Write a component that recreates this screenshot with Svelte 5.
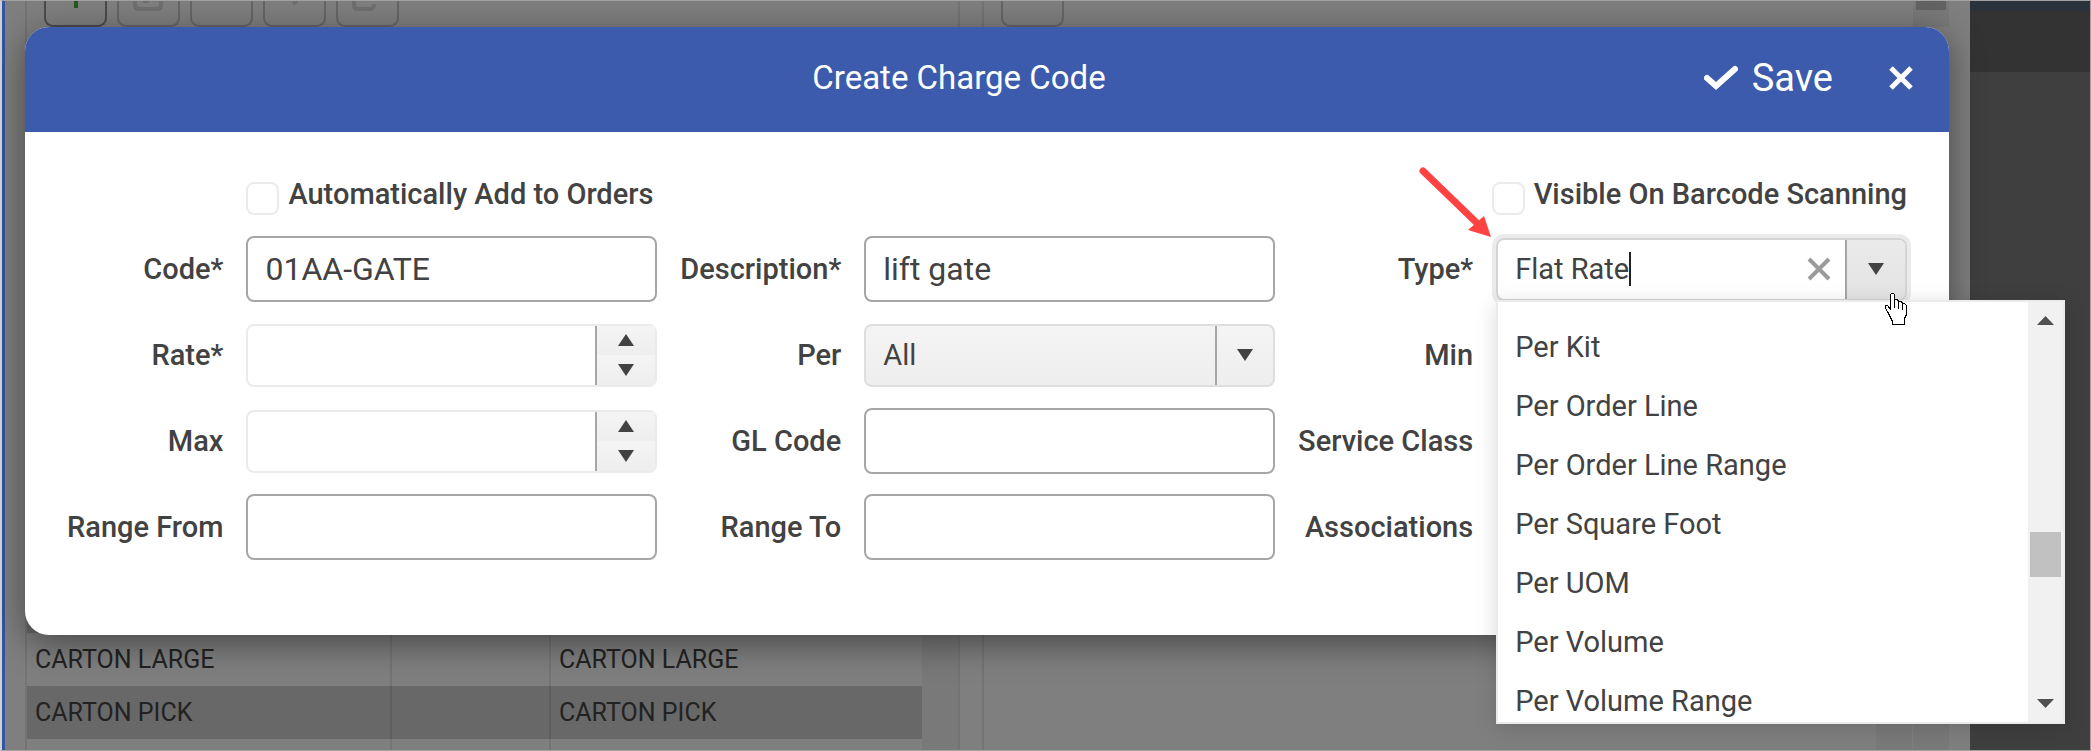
<script>
    let code = "01AA-GATE";
    let description = "lift gate";
    let type = "Flat Rate";
    let rate = "";
    let min = "";
    let max = "";
    let glCode = "";
    let rangeFrom = "";
    let rangeTo = "";
    let associations = "";
    let autoAdd = false;
    let visibleOnScan = false;

    let tools = ["add", "save", "blank", "filter", "copy"];

    let rows = ["CARTON LARGE", "CARTON PICK"];

    let types = [
        "Per Kit",
        "Per Order Line",
        "Per Order Line Range",
        "Per Square Foot",
        "Per UOM",
        "Per Volume",
        "Per Volume Range",
    ];
</script>

<div class="page">
    <main class="workspace">
        <section class="panel left">
            <div class="toolbar">
                {#each tools as tool}
                <button class="tool {tool}" aria-label={tool}>
                    <svg width="36" height="26" viewBox="0 0 36 26" fill="none" stroke-width="4">
                        {#if tool === "add"}
                        <path d="M18 0V7" stroke="#1d5a20" />
                        {:else if tool === "save"}
                        <path d="M4 0V4Q4 8 8 8H26Q30 8 30 4V0M12 0L18 0" />
                        {:else if tool === "filter"}
                        <path d="M16 3L20 0" />
                        {:else if tool === "copy"}
                        <path d="M4 0V4Q4 8 8 8H20Q24 8 24 3" />
                        {/if}
                    </svg>
                </button>
                {/each}
            </div>
            <div class="grid-wrap">
                <table>
                    <tbody>
                        <tr class="dark"><td></td><td></td><td></td></tr>
                        {#each rows as row, i}
                        <tr class:dark={i % 2 === 1}>
                            <td>{row}</td>
                            <td></td>
                            <td>{row}</td>
                        </tr>
                        {/each}
                        <tr class="cut"><td></td><td></td><td></td></tr>
                    </tbody>
                </table>
                <div class="track"></div>
            </div>
        </section>
        <section class="panel right">
            <div class="toolbar">
                <button class="tool" aria-label="more"></button>
                <div class="track top"><div class="thumb"></div></div>
            </div>
            <div class="tracks">
                <div class="track"></div>
                <div class="track"></div>
            </div>
        </section>
    </main>
    <aside class="outside"></aside>

    <div class="overlay">
        <div class="modal" role="dialog" aria-labelledby="title">
            <header>
                <h1 id="title">Create Charge Code</h1>
                <div class="actions">
                    <button class="save-button">
                        <svg width="34" height="26" viewBox="0 0 34 26" fill="none" stroke="#fff" stroke-width="6" stroke-linecap="round">
                            <path d="M3 13L12 21L31 4" />
                        </svg>
                        Save
                    </button>
                    <button class="close" aria-label="Close">
                        <svg width="24" height="24" viewBox="0 0 24 24" stroke="#fff" stroke-width="5">
                            <path d="M2 2L22 22M22 2L2 22" />
                        </svg>
                    </button>
                </div>
            </header>

            <form>
                <label class="check first">
                    <input type="checkbox" bind:checked={autoAdd} />
                    Automatically Add to Orders
                </label>
                <label class="check last">
                    <input type="checkbox" bind:checked={visibleOnScan} />
                    Visible On Barcode Scanning
                </label>

                <label for="code">Code*</label>
                <input class="text" id="code" bind:value={code} />
                <label for="description">Description*</label>
                <input class="text" id="description" bind:value={description} />
                <label for="type">Type*</label>
                <div class="combo">
                    <div class="entry">
                        <input id="type" bind:value={type} />
                        <span class="caret"></span>
                    </div>
                    <button type="button" class="clear" aria-label="Clear">
                        <svg width="24" height="24" viewBox="0 0 24 24" stroke="#9b9b9b" stroke-width="4">
                            <path d="M2 2L22 22M22 2L2 22" />
                        </svg>
                    </button>
                    <button type="button" class="drop" aria-label="Open list">
                        <svg width="16" height="12" viewBox="0 0 16 12"><path d="M0 0H16L8 12Z" fill="#424242" /></svg>
                    </button>

                    <div class="menu">
                        <ul role="listbox" aria-label="Type">
                            {#each types as item}
                            <li role="option" aria-selected="false">{item}</li>
                            {/each}
                        </ul>
                        <div class="scroll">
                            <svg width="17" height="9" viewBox="0 0 17 9"><path d="M0 9L8.5 0L17 9Z" fill="#505050" /></svg>
                            <div class="bar"></div>
                            <svg width="17" height="9" viewBox="0 0 17 9"><path d="M0 0H17L8.5 9Z" fill="#505050" /></svg>
                        </div>
                    </div>

                    <svg class="pointer" width="84" height="80" viewBox="0 0 84 80">
                        <path d="M9 11L66 66" stroke="#ff4343" stroke-width="7" stroke-linecap="round" />
                        <path d="M77 77L70 56L54 70Z" fill="#ff4343" />
                    </svg>
                    <svg class="hand" width="24" height="33" viewBox="0 0 24 33" shape-rendering="crispEdges">
                        <path d="M5.5 1.5L6.5 .5H8.5L9.5 1.5V6.5H12.5L13.5 8.5H16.5L17.5 10.5H19.5L21.5 12.5V21.5L19.5 25.5V31.5H7.5V28.5L4.5 22.5L2.5 18.5L.5 15.5V12.5H2.5L5.5 16.5Z" fill="#fff" stroke="#000" />
                        <path d="M9.5 6V15M13.5 8V16M17.5 10V17" stroke="#000" />
                    </svg>
                </div>

                <label for="rate">Rate*</label>
                <div class="spin">
                    <input id="rate" bind:value={rate} />
                    <div class="steps">
                        <button type="button" aria-label="Increase rate"><svg width="16" height="12" viewBox="0 0 16 12"><path d="M0 12L8 0L16 12Z" fill="#424242" /></svg></button>
                        <button type="button" aria-label="Decrease rate"><svg width="16" height="12" viewBox="0 0 16 12"><path d="M0 0H16L8 12Z" fill="#424242" /></svg></button>
                    </div>
                </div>
                <label for="per">Per</label>
                <div class="select">
                    <select id="per">
                        <option>All</option>
                    </select>
                    <svg width="16" height="12" viewBox="0 0 16 12"><path d="M0 0H16L8 12Z" fill="#424242" /></svg>
                </div>
                <label for="min">Min</label>
                <div class="spin">
                    <input id="min" bind:value={min} />
                </div>

                <label for="max">Max</label>
                <div class="spin">
                    <input id="max" bind:value={max} />
                    <div class="steps">
                        <button type="button" aria-label="Increase max"><svg width="16" height="12" viewBox="0 0 16 12"><path d="M0 12L8 0L16 12Z" fill="#424242" /></svg></button>
                        <button type="button" aria-label="Decrease max"><svg width="16" height="12" viewBox="0 0 16 12"><path d="M0 0H16L8 12Z" fill="#424242" /></svg></button>
                    </div>
                </div>
                <label for="gl">GL Code</label>
                <input class="text" id="gl" bind:value={glCode} />
                <label for="service">Service Class</label>
                <div class="select">
                    <select id="service"></select>
                </div>

                <label for="from">Range From</label>
                <input class="text" id="from" bind:value={rangeFrom} />
                <label for="to">Range To</label>
                <input class="text" id="to" bind:value={rangeTo} />
                <label for="associations">Associations</label>
                <input class="text" id="associations" bind:value={associations} />
            </form>
        </div>
    </div>
</div>

<style>
    :global(body) {
        margin: 0;
    }

    .page, .page * {
        box-sizing: border-box;
    }

    .page {
        position: relative;
        display: flex;
        height: 100vh;
        overflow: hidden;
        font-family: Roboto, sans-serif;
        font-size: 29px;
        color: #424242;
        border-top: 1px solid #a2a2a2;
        border-bottom: 1px solid #a2a2a2;
        border-left: 2px solid #d0d0d0;
        border-right: 1px solid #a2a2a2;
    }

    button, input, select {
        font: inherit;
        color: inherit;
        margin: 0;
        padding: 0;
        border: 0;
        background: none;
        outline: none;
        min-width: 0;
    }

    .workspace {
        flex: 1;
        display: flex;
        gap: 22px;
        padding: 0 21px 0 20px;
        background: #7f7f7f;
        border-left: 3px solid #3056a4;
    }

    .outside {
        width: 120px;
        background: linear-gradient(#2a323c 10px, #333 10px, #333 71px, #3f3f3f 71px);
    }

    .panel {
        display: flex;
        flex-direction: column;
        justify-content: space-between;
        border-left: 2px solid #747474;
    }

    .left {
        flex: 934;
        border-right: 2px solid #747474;
    }

    .right {
        flex: 968;
    }

    .toolbar {
        display: flex;
        gap: 10px;
        padding-left: 17px;
        height: 26px;
    }

    .tool {
        display: flex;
        justify-content: center;
        width: 63px;
        height: 26px;
        border: 2px solid #666;
        border-top: 0;
        border-radius: 0 0 9px 9px;
        stroke: #6f6f6f;
    }

    .add {
        border-color: #4b4b4b;
    }

    .grid-wrap {
        display: flex;
    }

    .track {
        width: 36px;
        background: #797979;
    }

    .track.top {
        margin-left: auto;
        padding: 0 3px;
    }

    .thumb {
        height: 9px;
        background: #636363;
    }

    .tracks {
        display: flex;
        justify-content: flex-end;
        gap: 1px;
        height: 80px;
    }

    table {
        flex: 1;
        table-layout: fixed;
        border-collapse: collapse;
        font-size: 25px;
        color: #222;
    }

    td {
        height: 53px;
        padding: 0 8px;
        border-right: 2px solid #747474;
    }

    td:nth-child(1) {
        width: 364px;
    }

    td:nth-child(2) {
        width: 159px;
    }

    td:last-child {
        border-right: 0;
    }

    .dark {
        background: #686868;
    }

    .dark td {
        border-color: #5e5e5e;
    }

    .cut td {
        height: 11px;
    }

    .overlay {
        position: absolute;
        inset: 0;
        padding: 26px 141px 0 23px;
    }

    .modal {
        border-radius: 24px;
        background: #fff;
        box-shadow: 0 8px 36px rgba(0, 0, 0, 0.45);
    }

    header {
        display: grid;
        grid-template-columns: 1fr auto 1fr;
        align-items: center;
        height: 105px;
        padding: 0 36px 4px 0;
        color: #fff;
        background: #3c5bac;
        border-radius: 24px 24px 0 0;
    }

    h1 {
        grid-column: 2;
        margin: 0;
        padding-right: 20px;
        font-size: 33px;
        font-weight: 400;
    }

    .actions {
        display: flex;
        justify-content: flex-end;
        align-items: center;
        gap: 56px;
    }

    .save-button {
        display: flex;
        align-items: center;
        gap: 14px;
        font-size: 38px;
    }

    .close {
        display: flex;
    }

    form {
        display: grid;
        grid-template-columns: auto minmax(0, 1fr) auto minmax(0, 1fr) auto minmax(0, 1fr);
        grid-template-rows: 44px repeat(4, 86px);
        column-gap: 23px;
        align-items: center;
        padding: 50px 42px 65px;
    }

    label {
        font-weight: 500;
        text-align: right;
        white-space: nowrap;
    }

    .check {
        display: flex;
        gap: 9px;
        align-self: start;
        line-height: 24px;
    }

    .check input {
        appearance: none;
        flex-shrink: 0;
        width: 33px;
        height: 33px;
        border: 2px solid #ebebeb;
        border-radius: 8px;
    }

    .first {
        grid-column: 2;
    }

    .last {
        grid-column: 6;
        justify-self: end;
    }

    .text {
        width: 100%;
        height: 66px;
        padding: 0 17px;
        border: 2px solid #a6a6a6;
        border-radius: 8px;
        font-size: 32px;
    }

    .spin, .select, .combo {
        display: flex;
        height: 63px;
        border: 2px solid #ebebeb;
        border-radius: 8px;
    }

    .spin input {
        flex: 1;
        padding: 0 18px;
    }

    .steps {
        display: flex;
        flex-direction: column;
        width: 60px;
        border-left: 2px solid #a6a6a6;
    }

    .steps button {
        flex: 1;
        display: flex;
        align-items: center;
        justify-content: center;
        background: linear-gradient(#f4f4f4, #eee);
    }

    .select {
        align-items: center;
        border-color: #dedede;
        background: linear-gradient(#f4f4f4, #eee);
    }

    .select select {
        appearance: none;
        flex: 1;
        height: 59px;
        padding: 0 17px;
        border-right: 2px solid #a6a6a6;
    }

    .select svg {
        margin: 0 20px;
    }

    .combo {
        position: relative;
        z-index: 1;
        border-color: #d4d4d4;
        box-shadow: 0 0 0 4px #ebebeb;
    }

    .entry {
        flex: 1;
        display: flex;
        align-items: center;
        padding-left: 17px;
    }

    .entry input {
        field-sizing: content;
    }

    .caret {
        width: 2px;
        height: 34px;
        background: #222;
    }

    .clear {
        display: flex;
        align-items: center;
        padding: 0 14px;
    }

    .drop {
        display: flex;
        align-items: center;
        justify-content: center;
        width: 60px;
        border-left: 2px solid #a6a6a6;
        border-radius: 0 6px 6px 0;
        background: linear-gradient(#eaeaea, #e4e4e4);
    }

    .menu {
        position: absolute;
        top: 60px;
        left: -2px;
        display: flex;
        width: 569px;
        height: 424px;
        border: 2px solid #ebebeb;
        background: #fff;
        box-shadow: 0 4px 20px rgba(0, 0, 0, 0.15);
    }

    ul {
        flex: 1;
        margin: 0;
        padding: 16px 17px 0;
        list-style: none;
    }

    li {
        line-height: 59px;
    }

    .scroll {
        display: flex;
        flex-direction: column;
        align-items: center;
        width: 35px;
        padding: 14px 2px;
        background: #f1f1f1;
    }

    .bar {
        width: 100%;
        height: 45px;
        margin: auto 0 122px;
        background: #c1c1c1;
    }

    .pointer {
        position: absolute;
        left: -84px;
        top: -80px;
    }

    .hand {
        position: absolute;
        right: -4px;
        top: 53px;
    }
</style>
